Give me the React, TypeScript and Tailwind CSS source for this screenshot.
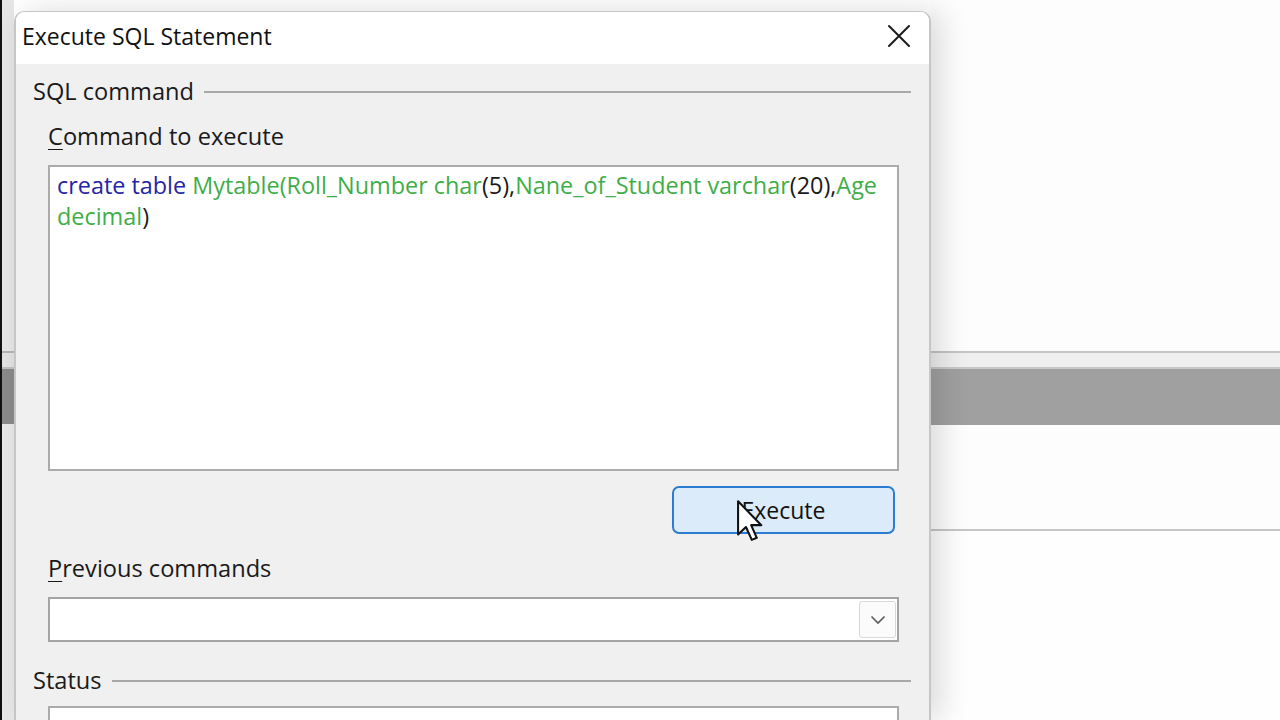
import React from "react"

const FONT = { fontFamily: '"Open Sans", "Noto Sans", "Liberation Sans", sans-serif' }

function CloseIcon() {
  return (
    <svg width="24" height="24" viewBox="0 0 24 24" fill="none">
      <path d="M2 2 L22 22 M22 2 L2 22" stroke="#1c1c1c" strokeWidth="2" strokeLinecap="round" />
    </svg>
  )
}

function Cursor() {
  return (
    <svg width="27" height="44" viewBox="0 0 13 21" className="absolute left-[62px] top-[11px]">
      <path d="M1 1 L1 17 L4.8 13.4 L7.6 19.6 L10 18.6 L7.3 12.5 L12.2 12.5 Z" fill="#ffffff" stroke="#111111" strokeWidth="1" strokeLinejoin="round" />
    </svg>
  )
}

function GroupHeader({ label }: { label: string }) {
  return (
    <div className="flex h-[28px] items-center">
      <span className="text-[23.6px] leading-none text-[#1a1a1a]">{label}</span>
      <div className="ml-[10px] h-[2px] flex-1 bg-[#a8a8a8]" />
    </div>
  )
}

export default function App() {
  return (
    <div className="flex h-[720px] w-[1280px] overflow-hidden bg-white" style={FONT}>
      {/* left strip of the app behind */}
      <div className="flex w-[14px] shrink-0">
        <div className="w-[2px] bg-[#111111]" />
        <div className="flex flex-1 flex-col bg-[#e6e6e6]">
          <div className="h-[351px]" />
          <div className="h-[2px] bg-[#b4b4b4]" />
          <div className="h-[14px] bg-[#e2e2e2]" />
          <div className="h-[2px] bg-[#c0c0c0]" />
          <div className="h-[55px] bg-[#8a8a8a]" />
          <div className="flex-1 bg-[#e8e8e8]" />
        </div>
      </div>

      {/* dialog */}
      <div className="relative z-10 mt-[11px] flex w-[917px] shrink-0 flex-col overflow-hidden rounded-t-[10px] border-x-2 border-t border-[#c6c6c6] bg-[#f0f0f0] shadow-[10px_0_30px_rgba(0,0,0,0.14)]">
        <div className="flex h-[52px] shrink-0 items-center justify-between bg-white pb-[4px] pl-[6px] pr-[18px]">
          <span className="text-[23px] leading-none text-[#111111]">Execute SQL Statement</span>
          <CloseIcon />
        </div>

        <div className="flex flex-col pl-[17px] pr-[18px]">
          <div className="mt-[14px]">
            <GroupHeader label="SQL command" />
          </div>

          <div className="ml-[15px] mr-[12px] flex flex-col">
            <div className="mt-[17px] flex h-[28px] items-center text-[23.6px] leading-none text-[#1a1a1a]">
              <span>
                <span className="underline decoration-1 underline-offset-[4px]">C</span>ommand to execute
              </span>
            </div>

            <div className="mt-[14px] h-[306px] border-2 border-[#ababab] bg-white px-[7px] pt-[3px] text-[23.4px] leading-[31px]">
              <div className="whitespace-nowrap">
                <span className="text-[#2525a6]">create table </span>
                <span className="text-[#3fae48]">Mytable(Roll_Number char</span>
                <span className="text-[#1a1a1a]">(5),</span>
                <span className="text-[#3fae48]">Nane_of_Student varchar</span>
                <span className="text-[#1a1a1a]">(20),</span>
                <span className="text-[#3fae48]">Age</span>
              </div>
              <div className="whitespace-nowrap">
                <span className="text-[#3fae48]">decimal</span>
                <span className="text-[#1a1a1a]">)</span>
              </div>
            </div>

            <div className="mt-[15px] flex justify-end pr-[4px]">
              <div className="relative flex h-[48px] w-[223px] items-center justify-center rounded-[7px] border-2 border-[#2c7dd1] bg-[#dcebf9] text-[23px] leading-none text-[#111111]">
                Execute
                <Cursor />
              </div>
            </div>

            <div className="mt-[21px] flex h-[28px] items-center text-[23.6px] leading-none text-[#1a1a1a]">
              <span>
                <span className="underline decoration-1 underline-offset-[4px]">P</span>revious commands
              </span>
            </div>

            <div className="mt-[14px] flex h-[45px] items-center justify-end border-2 border-[#a4a4a4] bg-white pr-[1px]">
              <div className="flex h-[37px] w-[37px] items-center justify-center rounded-[3px] border border-[#d8d8d8] bg-[#fbfbfb]">
                <svg width="16" height="10" viewBox="0 0 16 10" fill="none">
                  <path d="M1.5 1.5 L8 8 L14.5 1.5" stroke="#5a5a5a" strokeWidth="1.6" />
                </svg>
              </div>
            </div>
          </div>

          <div className="mt-[25px]">
            <GroupHeader label="Status" />
          </div>

          <div className="ml-[15px] mr-[12px] mt-[11px] h-[60px] border-2 border-[#ababab] bg-white" />
        </div>
      </div>

      {/* right side of the app behind */}
      <div className="flex flex-1 flex-col bg-[#fdfdfd]">
        <div className="h-[351px]" />
        <div className="h-[2px] bg-[#c4c4c4]" />
        <div className="h-[14px] bg-[#efefef]" />
        <div className="h-[2px] bg-[#c8c8c8]" />
        <div className="h-[56px] bg-[#a0a0a0]" />
        <div className="h-[104px] bg-[#fdfdfd]" />
        <div className="h-[2px] bg-[#c6c6c6]" />
        <div className="flex-1 bg-[#fefefe]" />
      </div>
    </div>
  )
}
